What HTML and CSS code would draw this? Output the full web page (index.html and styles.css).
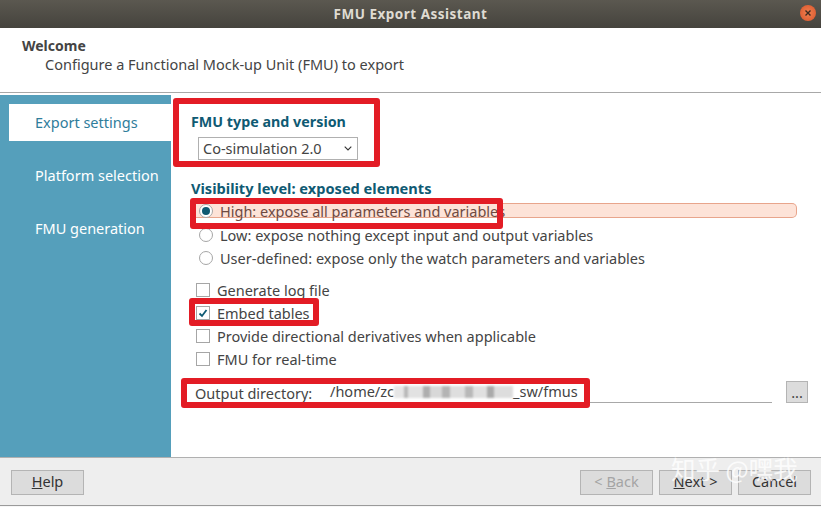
FILE: index.html
```html
<!DOCTYPE html>
<html lang="en">
<head>
  <meta charset="UTF-8" />
  <title>FMU Export Assistant</title>
  <link rel="stylesheet" href="styles.css">
</head>
<body>
  <div class="titlebar">
    <span class="title">FMU Export Assistant</span>
    <span class="close">
      <svg width="8" height="8" viewBox="0 0 8 8"><path d="M1.5 1.5l5 5M6.5 1.5l-5 5" stroke="#3c2a20" stroke-width="1.4" fill="none"/></svg>
    </span>
  </div>

  <div class="welcome">
    <div class="welcome-title">Welcome</div>
    <div class="welcome-sub">Configure a Functional Mock-up Unit (FMU) to export</div>
  </div>

  <div class="body">
    <div class="sidebar">
      <div class="step active">Export settings</div>
      <div class="step">Platform selection</div>
      <div class="step">FMU generation</div>
    </div>

    <div class="main">
      <h3 class="heading">FMU type and version</h3>
      <div class="select">
        <span class="select-value">Co-simulation 2.0</span>
        <svg width="8" height="5" viewBox="0 0 8 5"><path d="M.7.7L4 4 7.3.7" stroke="#333" stroke-width="1.1" fill="none"/></svg>
      </div>

      <h3 class="heading heading-vis">Visibility level: exposed elements</h3>
      <div class="radio-row selected"><span class="radio on"></span>High: expose all parameters and variables</div>
      <div class="radio-row"><span class="radio"></span>Low: expose nothing except input and output variables</div>
      <div class="radio-row"><span class="radio"></span>User-defined: expose only the watch parameters and variables</div>

      <div class="checks">
        <div class="check-row"><span class="check"></span>Generate log file</div>
        <div class="check-row">
          <span class="check">
            <svg width="10" height="10" viewBox="0 0 10 10"><path d="M1.5 5.5l2.5 2.5 4.5-6" stroke="#0f5a73" stroke-width="1.8" fill="none"/></svg>
          </span>Embed tables
        </div>
        <div class="check-row"><span class="check"></span>Provide directional derivatives when applicable</div>
        <div class="check-row"><span class="check"></span>FMU for real-time</div>
      </div>

      <div class="output-row">
        <span class="output-label">Output directory:</span>
        <div class="output-field">/home/zc<span class="blurred"></span>_sw/fmus</div>
        <button class="browse">...</button>
      </div>
    </div>
  </div>

  <div class="footer">
    <button class="btn"><u>H</u>elp</button>
    <div class="footer-right">
      <button class="btn disabled">&lt; <u>B</u>ack</button>
      <button class="btn"><u>N</u>ext &gt;</button>
      <button class="btn">Cancel</button>
    </div>
  </div>
  <div class="bottom-strip"></div>

  <!-- annotations drawn over the dialog -->
  <div class="mark mark-type"></div>
  <div class="mark mark-high"></div>
  <div class="mark mark-embed"></div>
  <div class="mark mark-output"></div>
  <div class="watermark">知乎 @嘿我</div>
</body>
</html>
```

FILE: styles.css
```css
html, body {
  height: 100%;
}
body {
  margin: 0;
  width: 821px;
  height: 507px;
  overflow: hidden;
  position: relative;
  background: #fff;
  color: #444;
  font-family: "Noto Sans", "Open Sans", sans-serif;
  font-size: 14.5px;
  line-height: 18px;
}
.titlebar {
  height: 28px;
  display: flex;
  align-items: center;
  justify-content: center;
  position: relative;
  background: linear-gradient(#5b5850, #45433d);
}
.title {
  color: #dfdbd2;
  font-weight: bold;
  font-size: 13.5px;
  letter-spacing: 0.5px;
}
.close {
  position: absolute;
  right: 5px;
  top: 5px;
  width: 16px;
  height: 16px;
  border-radius: 50%;
  background: radial-gradient(#f08050, #d9542a);
  display: flex;
  align-items: center;
  justify-content: center;
}
.welcome {
  height: 65px;
  box-sizing: border-box;
  padding: 9px 22px 0;
  border-bottom: 1px solid #a8a8a8;
}
.welcome-title {
  font-weight: bold;
  font-size: 14px;
}
.welcome-sub {
  padding-left: 23px;
}
.body {
  display: flex;
  height: 362px;
  margin-top: 2px;
}
.sidebar {
  width: 171px;
  background: #559fbb;
  padding: 9px 0 0 9px;
  box-sizing: border-box;
}
.step {
  height: 37px;
  line-height: 37px;
  padding-left: 26px;
  margin-bottom: 16px;
  color: #fff;
}
.step.active {
  background: #fff;
  color: #2f7d9b;
}
.main {
  flex: 1;
  padding: 18px 13px 0 20px;
}
.heading {
  margin: 0;
  font-size: 14.3px;
  line-height: 18px;
  font-weight: bold;
  color: #0f5a73;
}
.select {
  width: 160px;
  height: 23px;
  box-sizing: border-box;
  margin: 6px 0 0 7px;
  padding: 0 5px 0 4px;
  border: 1px solid #b0b0b0;
  display: flex;
  align-items: center;
  justify-content: space-between;
}
.select-value {
  margin-bottom: 2px;
}
.heading-vis {
  margin-top: 19px;
  font-size: 14.6px;
}
.radio-row {
  height: 23px;
  display: flex;
  align-items: center;
  padding-left: 8px;
}
.radio-row.selected {
  height: 13px;
  margin: 6px 0 5px;
  border: 1px solid #e8a58c;
  border-width: 1px 1px 1px 0;
  border-radius: 0 5px 5px 0;
  background: #fde3d8;
  color: #6e4a42;
  width: 597px;
  white-space: nowrap;
}
.radio {
  width: 14px;
  height: 14px;
  box-sizing: border-box;
  border: 1px solid #a6a6a6;
  border-radius: 50%;
  background: #fff;
  margin-right: 7px;
  flex: none;
  position: relative;
}
.radio.on::after {
  content: "";
  position: absolute;
  left: 2px;
  top: 2px;
  width: 8px;
  height: 8px;
  border-radius: 50%;
  background: #0f5a73;
}
.checks {
  margin-top: 9px;
}
.check-row {
  height: 23px;
  display: flex;
  align-items: center;
  padding-left: 5px;
}
.check {
  width: 14px;
  height: 14px;
  box-sizing: border-box;
  border: 1px solid #a6a6a6;
  margin-right: 7px;
  flex: none;
  display: flex;
  align-items: center;
  justify-content: center;
}
.output-row {
  display: flex;
  align-items: flex-end;
  margin-top: 10px;
  padding-left: 4px;
  height: 23px;
}
.output-label {
  width: 135px;
  flex: none;
  align-self: center;
  padding-top: 2px;
}
.output-field {
  width: 442px;
  height: 23px;
  box-sizing: border-box;
  border-bottom: 1px solid #a8a8a8;
  display: flex;
  align-items: center;
  flex: none;
}
.blurred {
  width: 119px;
  height: 12px;
  margin-top: 2px;
  background: linear-gradient(90deg, #e6e6e6 0 8%, #b8b8b8 8% 12%, #e2e2e2 12% 24%, #aeaeae 24% 30%, #d8d8d8 30% 40%, #b4b4b4 40% 47%, #dedede 47% 60%, #b8b8b8 60% 66%, #e0e0e0 66% 78%, #aaaaaa 78% 84%, #dddddd 84% 100%);
  filter: blur(1.2px);
}
.browse {
  width: 22px;
  height: 22px;
  margin-left: 14px;
  padding: 0;
  border: 1px solid #b4b4b4;
  background: #dcdcdc;
  color: #444;
  font: inherit;
  line-height: 16px;
}
.footer {
  height: 48px;
  box-sizing: border-box;
  border-top: 1px solid #b0b0b0;
  background: #eeeeee;
  padding: 12px 10px 0 11px;
  display: flex;
  justify-content: space-between;
  align-items: flex-start;
}
.footer-right {
  display: flex;
  gap: 6px;
}
.btn {
  width: 73px;
  height: 25px;
  padding: 0 0 3px;
  border: 1px solid #b4b4b4;
  background: #dcdcdc;
  color: #333;
  font: inherit;
}
.btn.disabled {
  color: #a4a4a4;
}
.bottom-strip {
  height: 2px;
  background: #f6f6f6;
  border-top: 1px solid #9a9a9a;
}
.mark {
  position: absolute;
  box-sizing: border-box;
  border: 6px solid #e31c25;
  border-radius: 3px;
}
.mark-type {
  left: 173px;
  top: 98px;
  width: 207px;
  height: 69px;
}
.mark-high {
  left: 190px;
  top: 198px;
  width: 313px;
  height: 31px;
}
.mark-embed {
  left: 189px;
  top: 298px;
  width: 130px;
  height: 28px;
}
.mark-output {
  left: 181px;
  top: 378px;
  width: 409px;
  height: 30px;
}
.watermark {
  position: absolute;
  left: 671px;
  top: 453px;
  font-family: "Noto Sans CJK SC", sans-serif;
  font-size: 24.5px;
  line-height: 32px;
  color: rgba(255, 255, 255, 0.82);
  white-space: nowrap;
}
```
